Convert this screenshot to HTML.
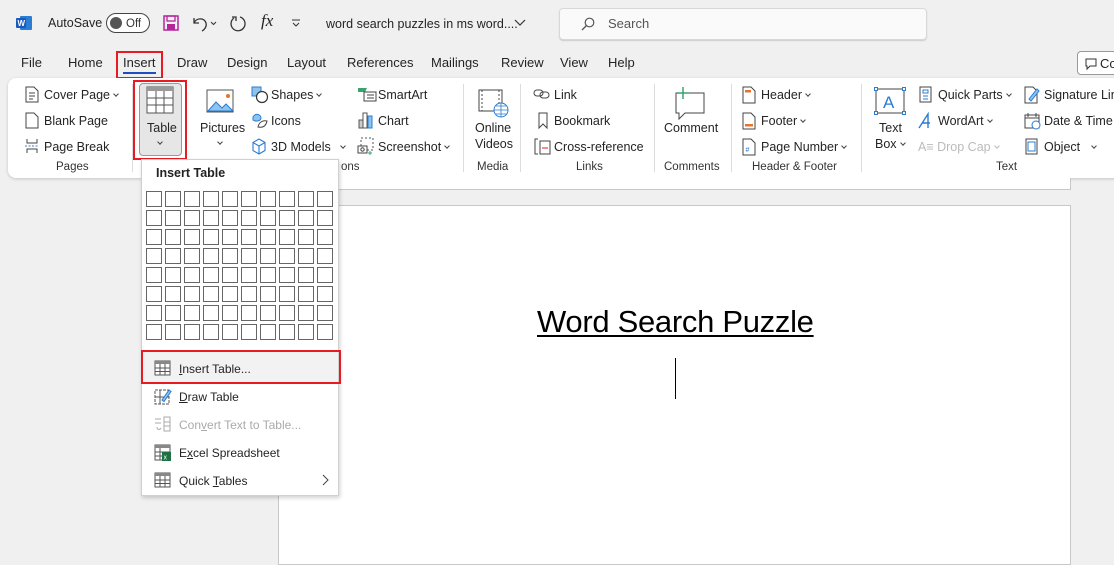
<!DOCTYPE html>
<html><head><meta charset="utf-8">
<style>
*{margin:0;padding:0;box-sizing:border-box}
body{width:1114px;height:559px;overflow:hidden;background:#f0f0f0;font-family:"Liberation Sans",sans-serif;color:#242424;position:relative;font-size:12.5px}
.a{position:absolute;white-space:nowrap}
.t{position:absolute;white-space:nowrap;font-size:12.5px;line-height:14px}
.lbl{position:absolute;font-size:11.5px;color:#333;white-space:nowrap}
.sep{position:absolute;top:84px;width:1px;height:88px;background:#dcdcdc}
.ic{position:absolute}
.grid{position:absolute;left:146px;top:191px}
.grid div{position:absolute;width:16px;height:16px;border:1px solid #666;background:#fff}
.mi{position:absolute;left:179px;font-size:12px}
.cv{display:inline-block;width:4px;height:4px;border-right:1px solid #444;border-bottom:1px solid #444;transform:rotate(45deg);margin-left:4px;vertical-align:3px}
.gcv{border-color:#bbb}
</style></head><body>

<!-- title bar -->
<svg class="ic" style="left:16px;top:15px" width="16" height="16"><rect x="4" y="1" width="12" height="14" rx="1" fill="#2b7cd3"/><rect x="0" y="3" width="10" height="10" rx="1" fill="#185abd"/><text x="1.5" y="11" font-size="8" fill="#fff" font-weight="bold" font-family="Liberation Sans">W</text></svg>
<div class="t" style="left:48px;top:16px;font-size:12.5px">AutoSave</div>
<div class="a" style="left:106px;top:13px;width:44px;height:20px;border:1px solid #444;border-radius:10px;background:#fff"></div>
<div class="a" style="left:110px;top:17px;width:12px;height:12px;border-radius:50%;background:#555"></div>
<div class="t" style="left:126px;top:17px;font-size:11.5px;color:#333">Off</div>
<svg class="ic" style="left:163px;top:15px" width="16" height="16"><rect x="1" y="1" width="14" height="14" fill="none" stroke="#b3269e" stroke-width="1.5"/><rect x="4" y="1" width="8" height="5" fill="none" stroke="#b3269e" stroke-width="1.3"/><rect x="4" y="9" width="8" height="6" fill="#b3269e"/></svg>
<svg class="ic" style="left:190px;top:14px" width="40" height="18"><path d="M4 4v5h5M4 9c2-5 10-6 12 0c1 4-2 7-4 8" fill="none" stroke="#333" stroke-width="1.3"/><path d="M21 8l2.5 2.5L26 8" fill="none" stroke="#333" stroke-width="1"/></svg>
<svg class="ic" style="left:228px;top:13px" width="20" height="20"><path d="M6 5a7 7 0 1 0 6-1" fill="none" stroke="#333" stroke-width="1.3"/><path d="M4 4h4v4" fill="none" stroke="#333" stroke-width="1.3"/></svg>
<div class="t" style="left:261px;top:14px;font-family:'Liberation Serif',serif;font-style:italic;font-size:17px">fx</div>
<svg class="ic" style="left:290px;top:18px" width="12" height="10"><path d="M2 2h8M3 5l3 3 3-3" fill="none" stroke="#333" stroke-width="1"/></svg>
<div class="t" style="left:326px;top:17px;font-size:12.5px">word search puzzles in ms word....</div>
<svg class="ic" style="left:514px;top:19px" width="12" height="8"><path d="M1 1l5 5 5-5" fill="none" stroke="#333" stroke-width="1.2"/></svg>
<div class="a" style="left:559px;top:8px;width:368px;height:32px;background:#fafafa;border:1px solid #d8d8d8;border-radius:4px;box-shadow:0 1px 1px #ccc"></div>
<svg class="ic" style="left:581px;top:17px" width="14" height="14"><circle cx="8.5" cy="5.5" r="4.3" fill="none" stroke="#555" stroke-width="1.2"/><path d="M5.5 8.5L1 13" stroke="#555" stroke-width="1.3"/></svg>
<div class="t" style="left:608px;top:17px;font-size:13px;color:#555">Search</div>

<!-- menu tabs -->
<div class="t" style="left:21px;top:56px;font-size:13px">File</div>
<div class="t" style="left:68px;top:56px;font-size:13px">Home</div>
<div class="t" style="left:123px;top:56px;font-size:13px">Insert</div>
<div class="a" style="left:123px;top:72px;width:33px;height:2px;background:#1e4fbf"></div>
<div class="a" style="left:116px;top:51px;width:47px;height:28px;border:2.5px solid #e81b23"></div>
<div class="t" style="left:177px;top:56px;font-size:13px">Draw</div>
<div class="t" style="left:227px;top:56px;font-size:13px">Design</div>
<div class="t" style="left:287px;top:56px;font-size:13px">Layout</div>
<div class="t" style="left:347px;top:56px;font-size:13px">References</div>
<div class="t" style="left:431px;top:56px;font-size:13px">Mailings</div>
<div class="t" style="left:501px;top:56px;font-size:13px">Review</div>
<div class="t" style="left:560px;top:56px;font-size:13px">View</div>
<div class="t" style="left:608px;top:56px;font-size:13px">Help</div>
<div class="a" style="left:1077px;top:51px;width:50px;height:24px;border:1px solid #999;border-radius:4px;background:#fff"></div>
<svg class="ic" style="left:1084px;top:57px" width="14" height="14"><path d="M2 2h10v7H6l-3 3V9H2z" fill="none" stroke="#333" stroke-width="1"/></svg>
<div class="t" style="left:1100px;top:57px;font-size:13px">Co</div>

<!-- ribbon -->
<div class="a" style="left:8px;top:78px;width:1120px;height:100px;background:#fff;border-radius:8px;box-shadow:0 1px 3px rgba(0,0,0,.18)"></div>

<!-- Pages -->
<svg class="ic" style="left:25px;top:86px" width="14" height="17"><path d="M1 1h8l4 4v11H1z" fill="none" stroke="#444"/><path d="M4 7h6M4 10h6M4 13h4" stroke="#444"/></svg>
<div class="t" style="left:44px;top:88px">Cover Page<i class="cv"></i></div>
<svg class="ic" style="left:25px;top:112px" width="14" height="17"><path d="M1 1h8l4 4v11H1z" fill="none" stroke="#444"/></svg>
<div class="t" style="left:44px;top:114px">Blank Page</div>
<svg class="ic" style="left:24px;top:138px" width="16" height="16"><path d="M3 1v4h10V1M3 15v-4h10v4" fill="none" stroke="#444"/><path d="M1 8h14" stroke="#2b7cd3" stroke-dasharray="2 1.5"/></svg>
<div class="t" style="left:44px;top:140px">Page Break</div>
<div class="lbl" style="left:56px;top:161px">Pages</div>
<div class="sep" style="left:132px"></div>

<!-- Table button -->
<div class="a" style="left:139px;top:83px;width:43px;height:73px;background:#e6e6e6;border:1px solid #999;border-radius:4px"></div>
<div class="a" style="left:133px;top:80px;width:54px;height:80px;border:2.5px solid #e81b23"></div>
<svg class="ic" style="left:146px;top:86px" width="30" height="30"><rect x="1" y="1" width="26" height="26" fill="#fff" stroke="#555"/><rect x="1" y="1" width="26" height="4" fill="#999"/><path d="M10 5v22M18 5v22M1 12h26M1 19h26" stroke="#555"/></svg>
<div class="t" style="left:147px;top:121px">Table</div>
<i class="cv a" style="left:154px;top:140px"></i>

<!-- Illustrations -->
<svg class="ic" style="left:206px;top:89px" width="30" height="24"><rect x="1" y="1" width="26" height="22" fill="#fff" stroke="#555"/><path d="M2 22l8-9 6 6 4-4 7 7z" fill="#8ec3ee" stroke="#2b7cd3"/><circle cx="22" cy="7" r="2" fill="#e8732c"/></svg>
<div class="t" style="left:200px;top:121px">Pictures</div>
<i class="cv a" style="left:214px;top:140px"></i>
<svg class="ic" style="left:251px;top:86px" width="18" height="18"><rect x="1" y="1" width="9" height="9" fill="#8ec3ee" stroke="#2b7cd3"/><circle cx="11" cy="11" r="5.5" fill="#fff" stroke="#333" stroke-width="1.2"/></svg>
<div class="t" style="left:271px;top:88px">Shapes<i class="cv"></i></div>
<svg class="ic" style="left:251px;top:112px" width="18" height="18"><path d="M2 5c3-5 8-2 8 1s-5 4-8 2z" fill="#8ec3ee" stroke="#2b7cd3"/><path d="M7 15c1-5 5-7 9-6-1 5-4 7-9 6z" fill="#fff" stroke="#444"/></svg>
<div class="t" style="left:271px;top:114px">Icons</div>
<svg class="ic" style="left:251px;top:138px" width="16" height="17"><path d="M8 1l6 3.5v8L8 16 2 12.5v-8z M2 4.5L8 8l6-3.5M8 8v8" fill="none" stroke="#2b7cd3" stroke-width="1.1"/></svg>
<div class="t" style="left:271px;top:140px">3D Models</div>
<i class="cv a" style="left:337px;top:144px"></i>
<svg class="ic" style="left:357px;top:86px" width="20" height="16"><path d="M1 2h9l-2 4H1z" fill="#3aa372"/><rect x="7" y="6" width="12" height="9" fill="#fff" stroke="#444"/><path d="M10 9h7M10 12h7" stroke="#444"/></svg>
<div class="t" style="left:378px;top:88px">SmartArt</div>
<svg class="ic" style="left:358px;top:111px" width="16" height="18"><rect x="1" y="9" width="4" height="8" fill="#ccc" stroke="#555"/><rect x="5" y="2" width="4" height="15" fill="#fff" stroke="#555"/><rect x="10" y="5" width="4" height="12" fill="#8ec3ee" stroke="#2b7cd3"/></svg>
<div class="t" style="left:378px;top:114px">Chart</div>
<svg class="ic" style="left:357px;top:137px" width="18" height="18"><rect x="4" y="1" width="12" height="12" fill="none" stroke="#555" stroke-dasharray="2 2"/><rect x="1" y="9" width="9" height="7" fill="#fff" stroke="#444"/><circle cx="5.5" cy="12.5" r="1.7" fill="none" stroke="#444"/><path d="M13 14v4M11 16h4" stroke="#3aa372"/></svg>
<div class="t" style="left:378px;top:140px">Screenshot<i class="cv"></i></div>
<div class="lbl" style="left:341px;top:161px">ons</div>
<div class="sep" style="left:463px"></div>

<!-- Media -->
<svg class="ic" style="left:477px;top:89px" width="32" height="30"><rect x="2" y="1" width="23" height="21" fill="#fff" stroke="#444"/><path d="M5 1v21M22 1v21" stroke="#444" stroke-dasharray="2 2"/><circle cx="24" cy="21" r="7" fill="#fff" stroke="#2b7cd3"/><path d="M17 21h14M24 14v14M19 17h10M19 25h10" stroke="#2b7cd3" stroke-width=".8"/></svg>
<div class="t" style="left:475px;top:121px">Online</div>
<div class="t" style="left:475px;top:137px">Videos</div>
<div class="lbl" style="left:477px;top:161px">Media</div>
<div class="sep" style="left:520px"></div>

<!-- Links -->
<svg class="ic" style="left:533px;top:88px" width="18" height="12"><rect x="1" y="2" width="9" height="6" rx="3" fill="none" stroke="#444"/><rect x="7" y="4" width="9" height="6" rx="3" fill="none" stroke="#444"/></svg>
<div class="t" style="left:554px;top:88px">Link</div>
<svg class="ic" style="left:537px;top:112px" width="12" height="18"><path d="M2 1h8v15l-4-4-4 4z" fill="none" stroke="#444"/></svg>
<div class="t" style="left:554px;top:114px">Bookmark</div>
<svg class="ic" style="left:534px;top:138px" width="18" height="17"><path d="M4 1H1v15h3" fill="none" stroke="#444"/><rect x="6" y="3" width="10" height="13" fill="#fff" stroke="#444"/><path d="M8 10h6" stroke="#e81b23"/></svg>
<div class="t" style="left:554px;top:140px">Cross-reference</div>
<div class="lbl" style="left:576px;top:161px">Links</div>
<div class="sep" style="left:654px"></div>

<!-- Comments -->
<svg class="ic" style="left:671px;top:86px" width="36" height="34"><path d="M5 7h28v20H14l-6 6v-6H5z" fill="#fff" stroke="#444"/><path d="M12 1v12M6 7h12" stroke="#3aa372" stroke-width="1.5"/></svg>
<div class="t" style="left:664px;top:121px">Comment</div>
<div class="lbl" style="left:664px;top:161px">Comments</div>
<div class="sep" style="left:731px"></div>

<!-- Header & Footer -->
<svg class="ic" style="left:742px;top:86px" width="14" height="18"><path d="M1 1h8l4 4v12H1z" fill="#fff" stroke="#444"/><rect x="3" y="4" width="6" height="2.5" fill="#e8732c"/></svg>
<div class="t" style="left:761px;top:88px">Header<i class="cv"></i></div>
<svg class="ic" style="left:742px;top:112px" width="14" height="18"><path d="M1 1h8l4 4v12H1z" fill="#fff" stroke="#444"/><rect x="3" y="12" width="8" height="2.5" fill="#e8732c"/></svg>
<div class="t" style="left:761px;top:114px">Footer<i class="cv"></i></div>
<svg class="ic" style="left:742px;top:138px" width="14" height="18"><path d="M1 1h8l4 4v12H1z" fill="#fff" stroke="#444"/><text x="3.5" y="14" font-size="7" fill="#2b7cd3" font-family="Liberation Sans">#</text></svg>
<div class="t" style="left:761px;top:140px">Page Number<i class="cv"></i></div>
<div class="lbl" style="left:752px;top:161px">Header &amp; Footer</div>
<div class="sep" style="left:861px"></div>

<!-- Text -->
<svg class="ic" style="left:873px;top:87px" width="34" height="30"><rect x="3" y="2" width="28" height="24" fill="#fff" stroke="#444"/><rect x="1.5" y="0.5" width="3" height="3" fill="#fff" stroke="#2b7cd3"/><rect x="29.5" y="0.5" width="3" height="3" fill="#fff" stroke="#2b7cd3"/><rect x="1.5" y="24.5" width="3" height="3" fill="#fff" stroke="#2b7cd3"/><rect x="29.5" y="24.5" width="3" height="3" fill="#fff" stroke="#2b7cd3"/><text x="10" y="21" font-size="17" fill="#2b7cd3" font-family="Liberation Sans">A</text></svg>
<div class="t" style="left:879px;top:121px">Text</div>
<div class="t" style="left:875px;top:137px">Box<i class="cv"></i></div>
<svg class="ic" style="left:919px;top:86px" width="14" height="18"><rect x="1" y="1" width="11" height="15" fill="#fff" stroke="#444"/><path d="M4 4h5v3H4zM4 10h5M4 13h5" fill="none" stroke="#2b7cd3"/></svg>
<div class="t" style="left:938px;top:88px">Quick Parts<i class="cv"></i></div>
<svg class="ic" style="left:917px;top:112px" width="16" height="18"><path d="M2 16L11 2v14M5 11h8" fill="none" stroke="#2b7cd3" stroke-width="1.4"/></svg>
<div class="t" style="left:938px;top:114px">WordArt<i class="cv"></i></div>
<div class="t" style="left:918px;top:140px;color:#bbb">A≡ Drop Cap<i class="cv gcv"></i></div>
<svg class="ic" style="left:1024px;top:86px" width="16" height="18"><path d="M1 1h8l4 4v12H1z" fill="#fff" stroke="#444"/><path d="M5 13l8-10 2 2-8 10z" fill="#8ec3ee" stroke="#2b7cd3"/></svg>
<div class="t" style="left:1044px;top:88px">Signature Line</div>
<svg class="ic" style="left:1024px;top:112px" width="18" height="18"><rect x="1" y="3" width="14" height="13" fill="#fff" stroke="#444"/><path d="M1 6h14M4 1v4M12 1v4" stroke="#444"/><circle cx="12" cy="13" r="4" fill="#fff" stroke="#2b7cd3"/></svg>
<div class="t" style="left:1044px;top:114px">Date &amp; Time</div>
<svg class="ic" style="left:1025px;top:138px" width="14" height="17"><rect x="1" y="1" width="11" height="15" fill="#fff" stroke="#444"/><rect x="3" y="4" width="7" height="9" fill="none" stroke="#2b7cd3"/></svg>
<div class="t" style="left:1044px;top:140px">Object</div>
<i class="cv a" style="left:1088px;top:144px"></i>
<div class="lbl" style="left:996px;top:161px">Text</div>

<!-- previous page bottom strip -->
<div class="a" style="left:278px;top:178px;width:793px;height:12px;background:#fff;border:1px solid #c8c8c8;border-top:none"></div>
<!-- page -->
<div class="a" style="left:278px;top:205px;width:793px;height:360px;background:#fff;border:1px solid #c8c8c8"></div>
<div class="a" style="left:537px;top:303px;font-size:31px;line-height:38px;text-decoration:underline;text-decoration-thickness:2px;text-underline-offset:3px;color:#000;letter-spacing:-.3px">Word Search Puzzle</div>
<div class="a" style="left:675px;top:358px;width:1px;height:41px;background:#000"></div>

<!-- dropdown -->
<div class="a" style="left:141px;top:159px;width:198px;height:337px;background:#fff;border:1px solid #d0d0d0;box-shadow:1px 2px 4px rgba(0,0,0,.18)"></div>
<div class="a" style="left:156px;top:166px;font-size:12.5px;font-weight:bold;color:#222">Insert Table</div>
<div class="grid" id="g"></div>
<div class="a" style="left:142px;top:352px;width:196px;height:30px;background:#f2f2f2"></div>
<div class="a" style="left:141px;top:350px;width:200px;height:34px;border:2.5px solid #e81b23"></div>

<svg class="ic" style="left:154px;top:360px" width="17" height="16"><rect x="1" y="1" width="15" height="14" fill="#fff" stroke="#555"/><rect x="1" y="1" width="15" height="3" fill="#888"/><path d="M6 4v11M11 4v11M1 8h15M1 11.5h15" stroke="#555"/></svg>
<div class="mi" style="top:362px"><u>I</u>nsert Table...</div>
<svg class="ic" style="left:154px;top:388px" width="18" height="17"><rect x="1" y="2" width="14" height="14" fill="#fff" stroke="#555" stroke-dasharray="3 1"/><path d="M6 2v14M1 9h14" stroke="#555"/><path d="M8 12l7-10 2 1.5-7 10z" fill="#8ec3ee" stroke="#2b7cd3"/></svg>
<div class="mi" style="top:390px"><u>D</u>raw Table</div>
<svg class="ic" style="left:154px;top:416px" width="17" height="16"><path d="M1 3h6M1 7h6M3 11c0 3 3 3 4 1" fill="none" stroke="#aaa"/><rect x="10" y="1" width="6" height="14" fill="none" stroke="#aaa"/><path d="M10 6h6M10 10h6" stroke="#aaa"/></svg>
<div class="mi" style="top:418px;color:#aaa">Con<u>v</u>ert Text to Table...</div>
<svg class="ic" style="left:154px;top:444px" width="17" height="17"><rect x="1" y="1" width="15" height="15" fill="#fff" stroke="#555"/><rect x="1" y="1" width="15" height="3" fill="#888"/><path d="M6 4v12M1 8h15M1 12h15" stroke="#555"/><rect x="8" y="8" width="9" height="9" fill="#1e7145"/><text x="9.5" y="15.5" font-size="7" fill="#fff" font-family="Liberation Sans">x</text></svg>
<div class="mi" style="top:446px">E<u>x</u>cel Spreadsheet</div>
<svg class="ic" style="left:154px;top:472px" width="17" height="16"><rect x="1" y="1" width="15" height="14" fill="#fff" stroke="#555"/><rect x="1" y="1" width="15" height="3" fill="#888"/><path d="M6 4v11M11 4v11M1 8h15M1 11.5h15" stroke="#555"/></svg>
<div class="mi" style="top:474px">Quick <u>T</u>ables</div>
<svg class="ic" style="left:321px;top:474px" width="8" height="12"><path d="M2 1l5 5-5 5" fill="none" stroke="#444"/></svg>

<script>
var g=document.getElementById('g'),h='';
for(var r=0;r<8;r++)for(var c=0;c<10;c++)h+='<div style="left:'+(c*19)+'px;top:'+(r*19)+'px"></div>';
g.innerHTML=h;
</script>
</body></html>
